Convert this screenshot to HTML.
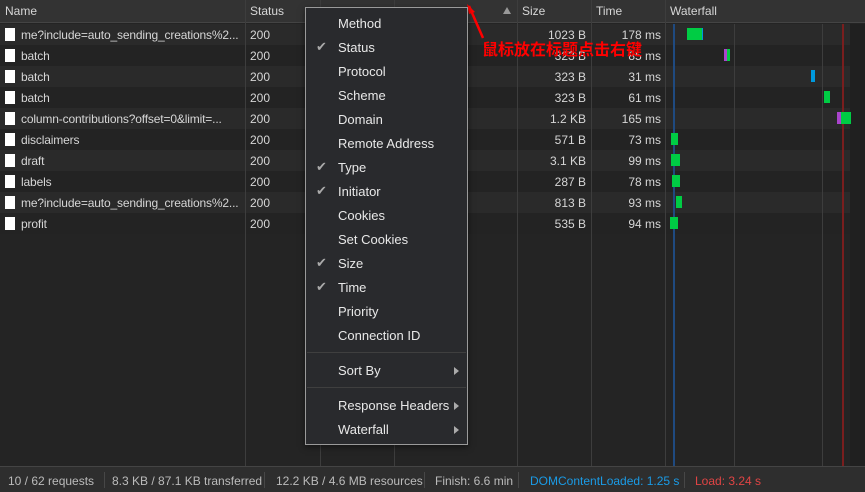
<!DOCTYPE html><html><head><meta charset="utf-8"><style>
*{margin:0;padding:0;box-sizing:border-box}
body{width:865px;height:492px;background:#242424;font-family:"Liberation Sans","Noto Sans CJK SC",sans-serif;font-size:12px;color:#d6d6d6;position:relative;overflow:hidden}
.hdr{position:absolute;left:0;top:0;width:865px;height:23px;background:#333;border-bottom:1px solid #444}
.hdr span{position:absolute;top:4px}
.row{position:absolute;left:0;width:865px;height:21px}
.row span{position:absolute;top:4px;white-space:nowrap}
.nm{letter-spacing:-0.15px}
.vl{position:absolute;top:0;width:1px;height:466px;background:#3d3d3d}
.ic{position:absolute;left:5px;top:4px;width:10px;height:13px;background:#fff}
.r{text-align:right}
.menu{position:absolute;left:305px;top:7px;width:163px;height:438px;background:#292a2d;border:1px solid #9a9a9a;box-shadow:0 2px 6px rgba(0,0,0,.5);color:#e8e8e8;font-size:13px}
.mi{position:absolute;left:32px}
.ck{position:absolute;left:10px;color:#aaa}
.sep{position:absolute;left:1px;right:1px;height:1px;background:#3f3f3f}
.ar{position:absolute;left:148px;width:0;height:0;border-left:5px solid #aaa;border-top:4px solid transparent;border-bottom:4px solid transparent}
.status{position:absolute;left:0;top:466px;width:865px;height:26px;background:#2e2e2e;border-top:1px solid #444;color:#bbb}
.status span{position:absolute;top:7px;white-space:nowrap}
.status i{position:absolute;top:5px;width:1px;height:16px;background:#474747}
.b{position:absolute;height:12px}
</style></head><body>
<div class="hdr"><span style="left:5px">Name</span><span style="left:250px">Status</span><span style="left:522px">Size</span><span style="left:596px">Time</span><span style="left:670px">Waterfall</span>
<div style="position:absolute;left:503px;top:7px;border-left:4px solid transparent;border-right:4px solid transparent;border-bottom:7px solid #999"></div></div>
<div class="row" style="top:24px;background:#2a2a2a"></div>
<div class="row" style="top:45px;background:#232323"></div>
<div class="row" style="top:66px;background:#2a2a2a"></div>
<div class="row" style="top:87px;background:#232323"></div>
<div class="row" style="top:108px;background:#2a2a2a"></div>
<div class="row" style="top:129px;background:#232323"></div>
<div class="row" style="top:150px;background:#2a2a2a"></div>
<div class="row" style="top:171px;background:#232323"></div>
<div class="row" style="top:192px;background:#2a2a2a"></div>
<div class="row" style="top:213px;background:#232323"></div>
<div style="position:absolute;left:850px;top:24px;width:15px;height:442px;background:#202020"></div>
<div class="vl" style="left:245px"></div><div class="vl" style="left:320px"></div><div class="vl" style="left:394px"></div><div class="vl" style="left:517px"></div><div class="vl" style="left:591px"></div><div class="vl" style="left:665px"></div><div class="vl" style="left:734px;top:24px"></div><div class="vl" style="left:822px;top:24px"></div>
<div style="position:absolute;left:673px;top:24px;width:2px;height:442px;background:#1f4a80"></div>
<div style="position:absolute;left:842px;top:24px;width:2px;height:442px;background:#7a1e1e"></div>

<div class="row" style="top:24px"><div class="ic"></div><span class="nm" style="left:21px">me?include=auto_sending_creations%2...</span><span style="left:250px">200</span><span class="r" style="right:279px">1023 B</span><span class="r" style="right:204px">178 ms</span><div class="b" style="left:687px;top:4px;width:15px;background:#0c4"></div><div class="b" style="left:702px;top:4px;width:1px;background:#09d"></div></div>
<div class="row" style="top:45px"><div class="ic"></div><span class="nm" style="left:21px">batch</span><span style="left:250px">200</span><span class="r" style="right:279px">323 B</span><span class="r" style="right:204px">85 ms</span><div class="b" style="left:724px;top:4px;width:3px;background:#a4c"></div><div class="b" style="left:727px;top:4px;width:3px;background:#0c4"></div></div>
<div class="row" style="top:66px"><div class="ic"></div><span class="nm" style="left:21px">batch</span><span style="left:250px">200</span><span class="r" style="right:279px">323 B</span><span class="r" style="right:204px">31 ms</span><div class="b" style="left:811px;top:4px;width:4px;background:#09d"></div></div>
<div class="row" style="top:87px"><div class="ic"></div><span class="nm" style="left:21px">batch</span><span style="left:250px">200</span><span class="r" style="right:279px">323 B</span><span class="r" style="right:204px">61 ms</span><div class="b" style="left:824px;top:4px;width:6px;background:#0c4"></div></div>
<div class="row" style="top:108px"><div class="ic"></div><span class="nm" style="left:21px">column-contributions?offset=0&amp;limit=...</span><span style="left:250px">200</span><span class="r" style="right:279px">1.2 KB</span><span class="r" style="right:204px">165 ms</span><div class="b" style="left:837px;top:4px;width:4px;background:#a4c"></div><div class="b" style="left:841px;top:4px;width:10px;background:#0c4"></div></div>
<div class="row" style="top:129px"><div class="ic"></div><span class="nm" style="left:21px">disclaimers</span><span style="left:250px">200</span><span class="r" style="right:279px">571 B</span><span class="r" style="right:204px">73 ms</span><div class="b" style="left:671px;top:4px;width:7px;background:#0c4"></div></div>
<div class="row" style="top:150px"><div class="ic"></div><span class="nm" style="left:21px">draft</span><span style="left:250px">200</span><span class="r" style="right:279px">3.1 KB</span><span class="r" style="right:204px">99 ms</span><div class="b" style="left:671px;top:4px;width:9px;background:#0c4"></div></div>
<div class="row" style="top:171px"><div class="ic"></div><span class="nm" style="left:21px">labels</span><span style="left:250px">200</span><span class="r" style="right:279px">287 B</span><span class="r" style="right:204px">78 ms</span><div class="b" style="left:672px;top:4px;width:8px;background:#0c4"></div></div>
<div class="row" style="top:192px"><div class="ic"></div><span class="nm" style="left:21px">me?include=auto_sending_creations%2...</span><span style="left:250px">200</span><span class="r" style="right:279px">813 B</span><span class="r" style="right:204px">93 ms</span><div class="b" style="left:676px;top:4px;width:6px;background:#0c4"></div></div>
<div class="row" style="top:213px"><div class="ic"></div><span class="nm" style="left:21px">profit</span><span style="left:250px">200</span><span class="r" style="right:279px">535 B</span><span class="r" style="right:204px">94 ms</span><div class="b" style="left:670px;top:4px;width:8px;background:#0c4"></div></div>

<svg style="position:absolute;left:466px;top:4px" width="20" height="40"><path d="M3 2 L17 34" stroke="#f00" stroke-width="2.5"/><path d="M1 0 L9 8 L3 10 Z" fill="#f00"/></svg>
<div style="position:absolute;left:482px;top:36px;color:#f00;font-size:16px;font-weight:bold;font-family:'Noto Sans CJK SC',sans-serif">鼠标放在标题点击右键</div>

<div class="menu">
<span class="mi" style="top:8px">Method</span>
<span class="ck" style="top:31px">✔</span><span class="mi" style="top:32px">Status</span>
<span class="mi" style="top:56px">Protocol</span>
<span class="mi" style="top:80px">Scheme</span>
<span class="mi" style="top:104px">Domain</span>
<span class="mi" style="top:128px">Remote Address</span>
<span class="ck" style="top:151px">✔</span><span class="mi" style="top:152px">Type</span>
<span class="ck" style="top:175px">✔</span><span class="mi" style="top:176px">Initiator</span>
<span class="mi" style="top:200px">Cookies</span>
<span class="mi" style="top:224px">Set Cookies</span>
<span class="ck" style="top:247px">✔</span><span class="mi" style="top:248px">Size</span>
<span class="ck" style="top:271px">✔</span><span class="mi" style="top:272px">Time</span>
<span class="mi" style="top:296px">Priority</span>
<span class="mi" style="top:320px">Connection ID</span>
<div class="sep" style="top:344px"></div>
<span class="mi" style="top:355px">Sort By</span><div class="ar" style="top:359px"></div>
<div class="sep" style="top:379px"></div>
<span class="mi" style="top:390px">Response Headers</span><div class="ar" style="top:394px"></div>
<span class="mi" style="top:414px">Waterfall</span><div class="ar" style="top:418px"></div>
</div>

<div class="status">
<span style="left:8px">10 / 62 requests</span><i style="left:104px"></i>
<span style="left:112px">8.3 KB / 87.1 KB transferred</span><i style="left:264px"></i>
<span style="left:276px">12.2 KB / 4.6 MB resources</span><i style="left:424px"></i>
<span style="left:435px">Finish: 6.6 min</span><i style="left:518px"></i>
<span style="left:530px;color:#1a9be6">DOMContentLoaded: 1.25 s</span><i style="left:684px"></i>
<span style="left:695px;color:#e04444">Load: 3.24 s</span>
</div>
</body></html>
